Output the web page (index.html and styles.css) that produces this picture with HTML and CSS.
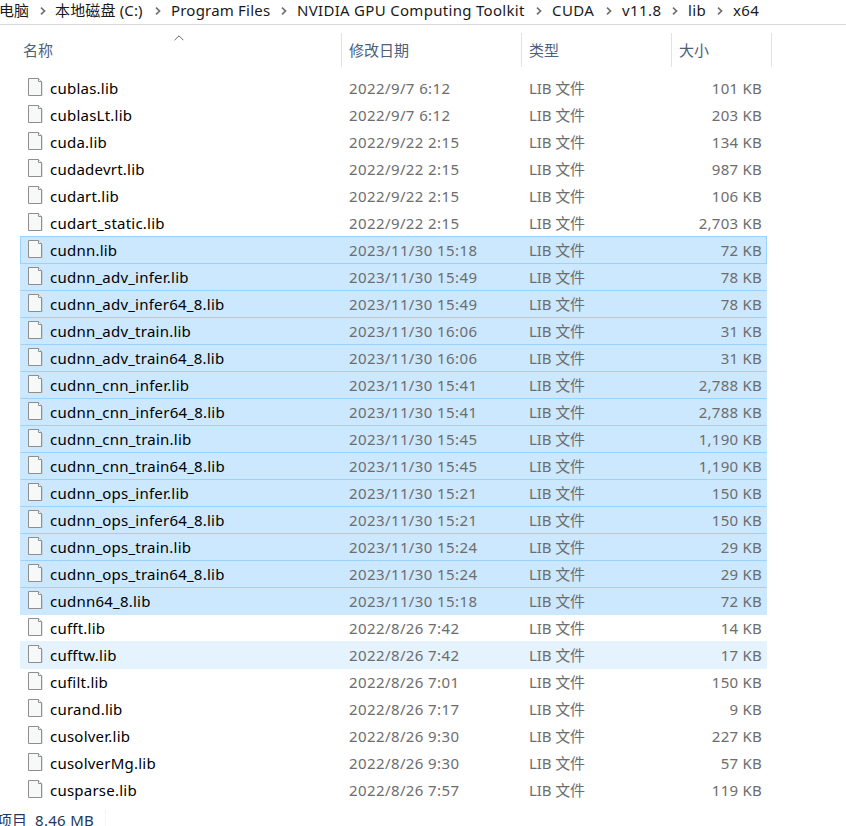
FILE: index.html
```
<!DOCTYPE html>
<html lang="zh-CN">
<head>
<meta charset="utf-8">
<title>x64</title>
<link rel="stylesheet" href="styles.css">
</head>
<body>
<svg class="defs" aria-hidden="true">
  <symbol id="file" viewBox="0 0 15 18">
    <path d="M.5 .5H10.5L13.5 3.5V17.5H.5Z" fill="#f7f9f9" stroke="#8e8e8e"/>
    <path d="M10.5 .5V3.5H13.5" fill="#fff" stroke="#8e8e8e"/>
    <path d="M14.2 4V18" fill="none" stroke="#999" stroke-width=".4"/>
  </symbol>
  <symbol id="chev" viewBox="0 0 6 8">
    <path d="M1 .7L4.5 4L1 7.3" fill="none" stroke="#707070" stroke-width="1.7"/>
  </symbol>
</svg>
<nav class="crumbs">
  <div class="crumb"><span class="label l1">电脑</span><svg class="chev"><use href="#chev"/></svg></div>
  <div class="crumb"><span class="label l2">本地磁盘 (C:)</span><svg class="chev"><use href="#chev"/></svg></div>
  <div class="crumb"><span class="label l3">Program Files</span><svg class="chev"><use href="#chev"/></svg></div>
  <div class="crumb"><span class="label l4">NVIDIA GPU Computing Toolkit</span><svg class="chev"><use href="#chev"/></svg></div>
  <div class="crumb"><span class="label l5">CUDA</span><svg class="chev"><use href="#chev"/></svg></div>
  <div class="crumb"><span class="label l6">v11.8</span><svg class="chev"><use href="#chev"/></svg></div>
  <div class="crumb"><span class="label l7">lib</span><svg class="chev"><use href="#chev"/></svg></div>
  <div class="crumb"><span class="label l8">x64</span></div>
</nav>
<header class="head">
  <div class="col">名称<svg class="sort" viewBox="0 0 10 6"><path d="M.6 5.2L5 .8L9.4 5.2" fill="none" stroke="#666"/></svg></div>
  <div class="col">修改日期</div>
  <div class="col">类型</div>
  <div class="col">大小</div>
</header>
<main class="list" id="list"></main>
<footer class="status"><span class="items">项目</span><span class="total">8.46 MB</span></footer>
<script src="files.js"></script>
</body>
</html>
```
FILE: styles.css
```
* { box-sizing: border-box; }
body {
  margin: 0;
  width: 846px;
  height: 826px;
  overflow: hidden;
  background: #fff;
  color: #000;
  font: 15px/20px "Noto Sans", "Noto Sans CJK SC", sans-serif;
  white-space: nowrap;
}
.defs { display: block; width: 0; height: 0; }
.crumbs {
  display: grid;
  grid-template-columns: 56px 115px 126px 255px 70px 66px 45px 60px;
  height: 25px;
  border-bottom: 1px solid #d9d9d9;
  color: #1a1a1a;
}
.crumb { display: flex; justify-content: space-between; height: 20px; align-items: center; padding-right: 10px; }
.chev { width: 6px; height: 8px; flex: none; margin-top: 1px; }
.l1 { margin-left: -1px; }
.l2 { margin-left: -1px; letter-spacing: .15px; }
.l3 { letter-spacing: .2px; }
.l4 { letter-spacing: .3px; }
.l5, .l6, .l7, .l8 { letter-spacing: .4px; }
.head {
  display: grid;
  grid-template-columns: 322px 180px 150px 100px;
  margin: 8px 0 0 20px;
  height: 34px;
  color: #4c607a;
}
.col { position: relative; padding: 7px 0 0 7px; border-right: 1px solid #e2e2e2; }
.col:first-child { padding-left: 3px; }
.sort { position: absolute; left: 154px; top: 2px; width: 10px; height: 6px; }
.list { margin: 7px 0 0 20px; width: 747px; }
.row {
  display: grid;
  grid-template-columns: 30px 299px 180px 110px 122px;
  height: 28px;
  margin-bottom: -1px;
  border: 1px solid transparent;
  align-items: center;
  color: #6d6d6d;
}
.icon { width: 15px; height: 18px; margin-left: 7px; align-self: start; margin-top: 3px; }
.row .name { color: #000; margin-left: -1px; letter-spacing: .23px; }
.row .date, .row .type { margin-left: -1px; }
.row .date { letter-spacing: .4px; }
.row .type { letter-spacing: -.1px; }
.row .size { text-align: right; letter-spacing: .25px; }
.selected { background: #cce8ff; border-top-color: #99d1ff; }
.focused { border-color: #99d1ff; position: relative; }
.hover { background: #e5f3ff; }
.status { display: flex; margin-top: 7px; height: 20px; color: #1e395b; }
.items { width: 35px; margin-left: -3px; }
.total { margin-left: 3px; padding-right: 11px; border-right: 1px solid #f4f4f4; letter-spacing: .3px; }
```
FILE: files.js
```
const files = [
  ["cublas.lib", "2022/9/7 6:12", "101", ""],
  ["cublasLt.lib", "2022/9/7 6:12", "203", ""],
  ["cuda.lib", "2022/9/22 2:15", "134", ""],
  ["cudadevrt.lib", "2022/9/22 2:15", "987", ""],
  ["cudart.lib", "2022/9/22 2:15", "106", ""],
  ["cudart_static.lib", "2022/9/22 2:15", "2,703", ""],
  ["cudnn.lib", "2023/11/30 15:18", "72", "selected focused"],
  ["cudnn_adv_infer.lib", "2023/11/30 15:49", "78", "selected"],
  ["cudnn_adv_infer64_8.lib", "2023/11/30 15:49", "78", "selected"],
  ["cudnn_adv_train.lib", "2023/11/30 16:06", "31", "selected"],
  ["cudnn_adv_train64_8.lib", "2023/11/30 16:06", "31", "selected"],
  ["cudnn_cnn_infer.lib", "2023/11/30 15:41", "2,788", "selected"],
  ["cudnn_cnn_infer64_8.lib", "2023/11/30 15:41", "2,788", "selected"],
  ["cudnn_cnn_train.lib", "2023/11/30 15:45", "1,190", "selected"],
  ["cudnn_cnn_train64_8.lib", "2023/11/30 15:45", "1,190", "selected"],
  ["cudnn_ops_infer.lib", "2023/11/30 15:21", "150", "selected"],
  ["cudnn_ops_infer64_8.lib", "2023/11/30 15:21", "150", "selected"],
  ["cudnn_ops_train.lib", "2023/11/30 15:24", "29", "selected"],
  ["cudnn_ops_train64_8.lib", "2023/11/30 15:24", "29", "selected"],
  ["cudnn64_8.lib", "2023/11/30 15:18", "72", "selected"],
  ["cufft.lib", "2022/8/26 7:42", "14", ""],
  ["cufftw.lib", "2022/8/26 7:42", "17", "hover"],
  ["cufilt.lib", "2022/8/26 7:01", "150", ""],
  ["curand.lib", "2022/8/26 7:17", "9", ""],
  ["cusolver.lib", "2022/8/26 9:30", "227", ""],
  ["cusolverMg.lib", "2022/8/26 9:30", "57", ""],
  ["cusparse.lib", "2022/8/26 7:57", "119", ""]
];
document.getElementById("list").innerHTML = files.map(([name, date, size, state]) =>
  `<div class="row ${state}"><svg class="icon"><use href="#file"/></svg><span class="name">${name}</span><span class="date">${date}</span><span class="type">LIB 文件</span><span class="size">${size} KB</span></div>`
).join("");
```
